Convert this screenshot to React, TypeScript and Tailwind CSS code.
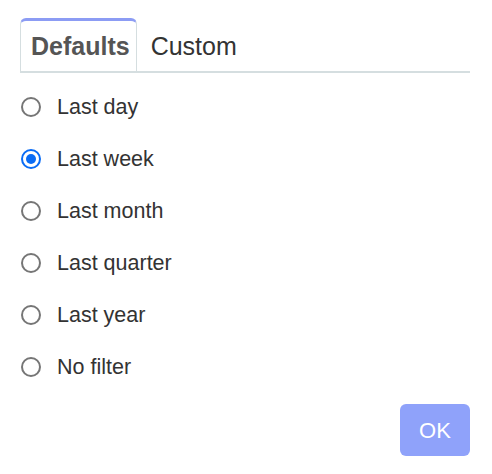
import { useState } from 'react';

const OPTIONS = ['Last day', 'Last week', 'Last month', 'Last quarter', 'Last year', 'No filter'];

export default function App() {
    const [tab, setTab] = useState<'defaults' | 'custom'>('defaults');
    const [selected, setSelected] = useState('Last week');

    return (
        <div className="w-[492px] h-[474px] bg-white pl-5 pr-[22px] pt-[18px]" style={{ fontFamily: '"Liberation Sans", Arial, sans-serif' }}>
            {/* Tabs */}
            <div className="flex items-end border-b-2 border-[#d5dee0]">
                <button
                    onClick={() => setTab('defaults')}
                    className={`h-[53px] pl-[10px] pr-[6px] pt-[2px] text-[25px] rounded-t-[6px] ${tab === 'defaults'
                        ? 'font-bold text-[#555] border-t-[3px] border-x border-t-[#8c9cf4] border-x-[#d5dee0] bg-white'
                        : 'text-[#333]'
                        }`}
                >
                    Defaults
                </button>
                <button
                    onClick={() => setTab('custom')}
                    className={`h-[53px] px-[14px] pt-[5px] text-[25px] rounded-t-[6px] ${tab === 'custom'
                        ? 'font-bold text-[#555] border-t-[3px] border-x border-t-[#8c9cf4] border-x-[#d5dee0] bg-white'
                        : 'text-[#333]'
                        }`}
                >
                    Custom
                </button>
            </div>

            {/* Options */}
            <div className="mt-[8px] flex flex-col">
                {OPTIONS.map((opt) => {
                    const checked = selected === opt;
                    return (
                        <label key={opt} className="h-[52px] flex items-center gap-4 cursor-pointer" onClick={() => setSelected(opt)}>
                            <span
                                className={`w-5 h-5 ml-px rounded-full border-2 flex items-center justify-center ${checked ? 'border-[#0a6cf5]' : 'border-[#767676]'}`}
                            >
                                {checked && <span className="w-[10px] h-[10px] rounded-full bg-[#0a6cf5]" />}
                            </span>
                            <span className="text-[21.5px] text-[#333]">{opt}</span>
                        </label>
                    );
                })}
            </div>

            <div className="flex justify-end mt-[11px]">
                <button className="w-[70px] h-[52px] rounded-[6px] bg-[#8fa2fa] text-white text-[22px]">OK</button>
            </div>
        </div>
    );
}
